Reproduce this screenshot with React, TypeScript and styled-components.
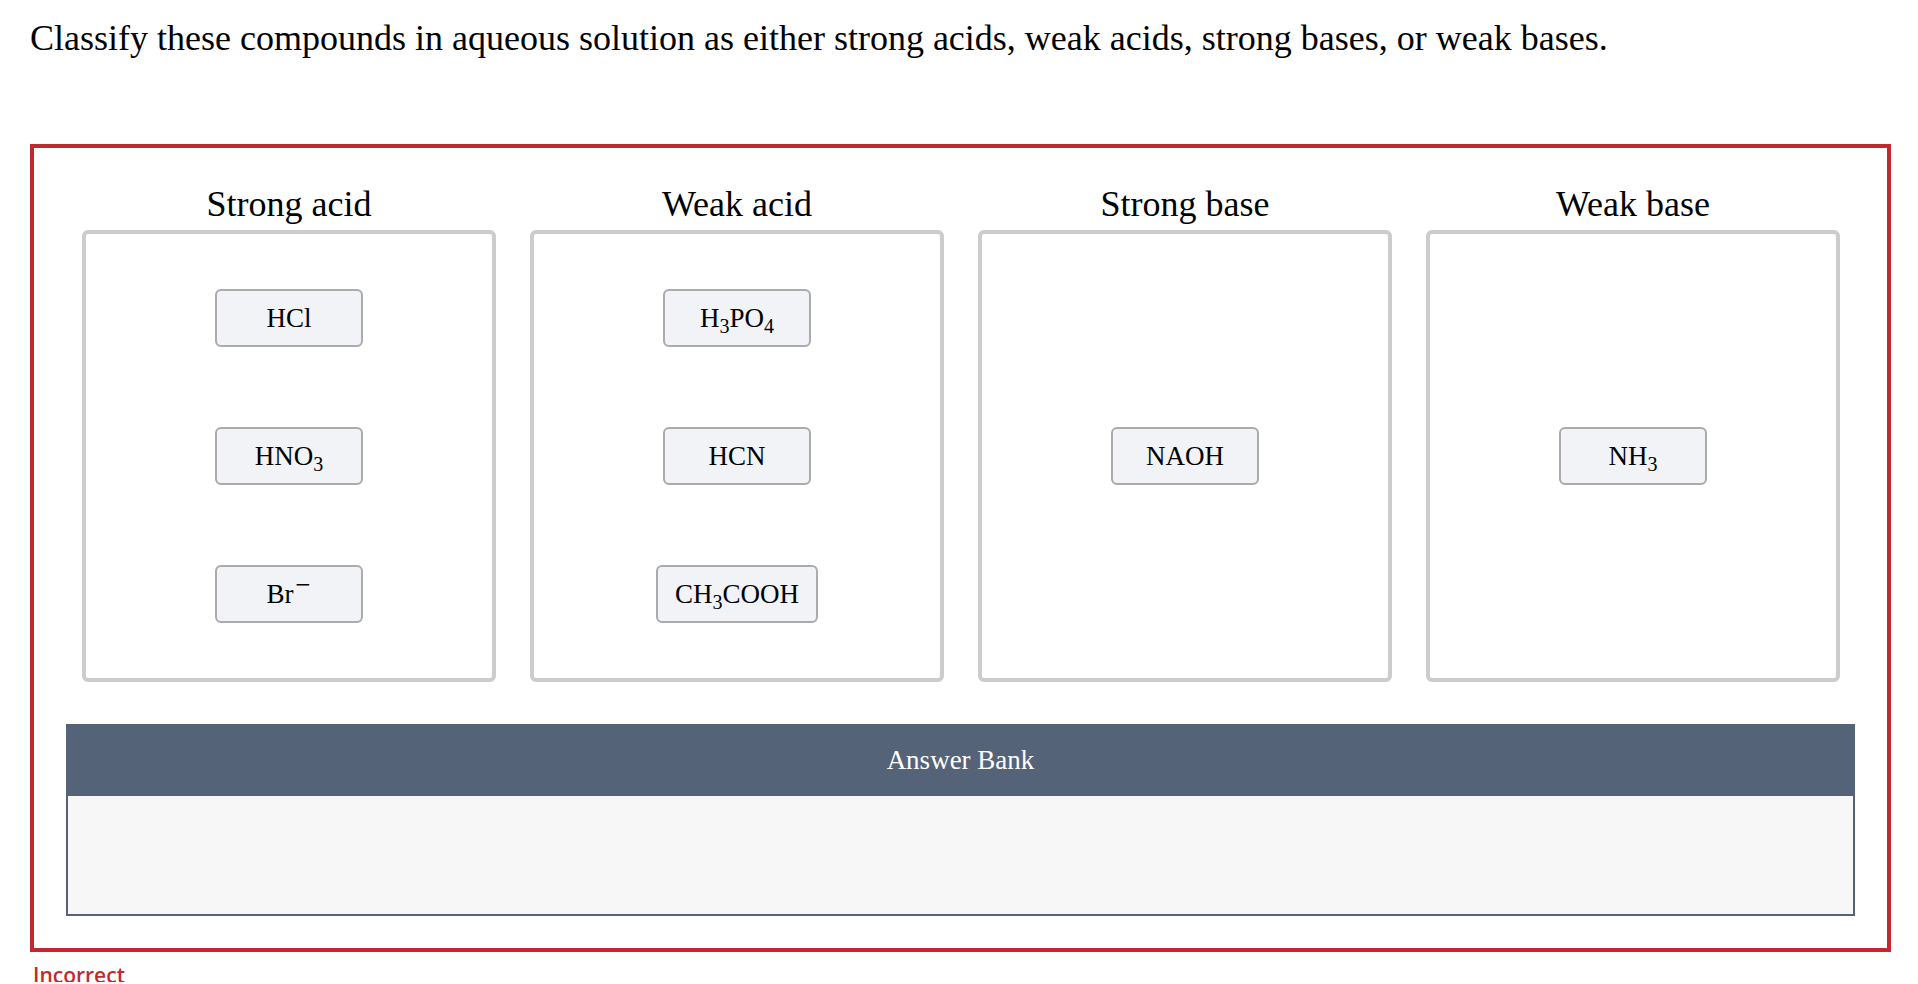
import React from "react";
import styled, { createGlobalStyle } from "styled-components";

const GlobalStyle = createGlobalStyle`
  html, body {
    margin: 0;
    padding: 0;
    background: #ffffff;
  }
  * { box-sizing: border-box; }
`;

const Page = styled.div`
  padding: 18px 27px 0 30px;
  font-family: "Liberation Serif", "Times New Roman", serif;
  color: #000;
`;

const Prompt = styled.p`
  margin: 0;
  font-size: 36px;
  line-height: 40px;
  font-weight: 400;
`;

const Question = styled.section`
  margin-top: 86px;
  border: 4px solid #c1292e;
  padding: 36px 32px 32px 32px;
  display: flex;
  flex-direction: column;
  gap: 42px;
`;

const Columns = styled.div`
  display: flex;
  gap: 34px;
  padding: 0 15px 0 16px;
`;

const Column = styled.div`
  flex: 1 1 0;
  display: flex;
  flex-direction: column;
  align-items: stretch;
  gap: 6px;
`;

const ColumnTitle = styled.div`
  text-align: center;
  font-size: 36px;
  line-height: 40px;
`;

const DropZone = styled.div`
  height: 452px;
  border: 4px solid #cccccc;
  border-radius: 6px;
  padding: 55px 0;
  display: flex;
  flex-direction: column;
  gap: 80px;
`;

const Slot = styled.div`
  height: 58px;
  display: flex;
  justify-content: center;
`;

const Chip = styled.div`
  min-width: 148px;
  height: 58px;
  padding: 0 17px;
  display: inline-flex;
  align-items: center;
  justify-content: center;
  background: #f2f3f7;
  border: 2px solid #ababab;
  border-radius: 6px;
  font-size: 27px;
  line-height: 1;
  white-space: nowrap;
`;

const Sub = styled.span`
  font-size: 20px;
  position: relative;
  top: 8px;
  line-height: 0;
`;

const Sup = styled.span`
  font-family: "DejaVu Sans", "Liberation Sans", sans-serif;
  font-size: 20px;
  position: relative;
  top: -10px;
  line-height: 0;
  margin-left: 1px;
`;

const AnswerBank = styled.div`
  display: flex;
  flex-direction: column;
`;

const BankHeader = styled.div`
  height: 72px;
  background: #556379;
  color: #ffffff;
  font-size: 27px;
  display: flex;
  align-items: center;
  justify-content: center;
`;

const BankBody = styled.div`
  height: 120px;
  background: #f7f7f7;
  border: 2px solid #556379;
  border-top: none;
`;

const Feedback = styled.div`
  margin-top: 16px;
  padding-left: 3px;
  font-family: "Open Sans", "Liberation Sans", sans-serif;
  font-weight: 600;
  font-size: 21px;
  line-height: 14px;
  color: #c1292e;
`;

type SlotItem = React.ReactNode | null;

const columns: { title: string; slots: SlotItem[] }[] = [
  {
    title: "Strong acid",
    slots: [
      <>HCl</>,
      <>
        HNO<Sub>3</Sub>
      </>,
      <>
        Br<Sup>−</Sup>
      </>,
    ],
  },
  {
    title: "Weak acid",
    slots: [
      <>
        H<Sub>3</Sub>PO<Sub>4</Sub>
      </>,
      <>HCN</>,
      <>
        CH<Sub>3</Sub>COOH
      </>,
    ],
  },
  {
    title: "Strong base",
    slots: [null, <>NAOH</>, null],
  },
  {
    title: "Weak base",
    slots: [
      null,
      <>
        NH<Sub>3</Sub>
      </>,
      null,
    ],
  },
];

export default function App() {
  return (
    <>
      <GlobalStyle />
      <Page>
        <Prompt>
          Classify these compounds in aqueous solution as either strong acids,
          weak acids, strong bases, or weak bases.
        </Prompt>
        <Question>
          <Columns>
            {columns.map((col) => (
              <Column key={col.title}>
                <ColumnTitle>{col.title}</ColumnTitle>
                <DropZone>
                  {col.slots.map((item, i) => (
                    <Slot key={i}>{item ? <Chip>{item}</Chip> : null}</Slot>
                  ))}
                </DropZone>
              </Column>
            ))}
          </Columns>
          <AnswerBank>
            <BankHeader>Answer Bank</BankHeader>
            <BankBody />
          </AnswerBank>
        </Question>
        <Feedback>Incorrect</Feedback>
      </Page>
    </>
  );
}
